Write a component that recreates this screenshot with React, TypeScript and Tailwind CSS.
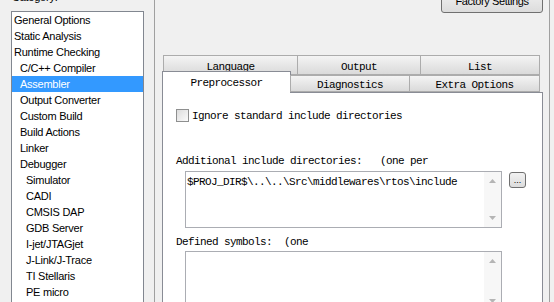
import React from "react";

const items: { label: string; indent: number; selected?: boolean }[] = [
  { label: "General Options", indent: 0 },
  { label: "Static Analysis", indent: 0 },
  { label: "Runtime Checking", indent: 0 },
  { label: "C/C++ Compiler", indent: 1 },
  { label: "Assembler", indent: 1, selected: true },
  { label: "Output Converter", indent: 1 },
  { label: "Custom Build", indent: 1 },
  { label: "Build Actions", indent: 1 },
  { label: "Linker", indent: 1 },
  { label: "Debugger", indent: 1 },
  { label: "Simulator", indent: 2 },
  { label: "CADI", indent: 2 },
  { label: "CMSIS DAP", indent: 2 },
  { label: "GDB Server", indent: 2 },
  { label: "I-jet/JTAGjet", indent: 2 },
  { label: "J-Link/J-Trace", indent: 2 },
  { label: "TI Stellaris", indent: 2 },
  { label: "PE micro", indent: 2 },
];

const mono = "font-['Liberation_Mono',monospace] text-[11px] tracking-[-0.6px] leading-[12px] text-black";

function UpArrow() {
  return (
    <svg width="7" height="4" viewBox="0 0 7 4">
      <path d="M0 4 L3.5 0 L7 4 Z" fill="#b5b5b5" />
    </svg>
  );
}
function DownArrow() {
  return (
    <svg width="7" height="4" viewBox="0 0 7 4">
      <path d="M0 0 L3.5 4 L7 0 Z" fill="#b5b5b5" />
    </svg>
  );
}

function ScrollBar() {
  return (
    <div className="w-[17px] h-full bg-[#f7f7f7] flex flex-col justify-between items-center py-[7px]">
      <UpArrow />
      <DownArrow />
    </div>
  );
}

export default function App() {
  return (
    <div className="w-[554px] h-[302px] overflow-hidden bg-[#f0f0f0] flex font-['Liberation_Sans',sans-serif] text-[11px] tracking-[-0.25px]">
      {/* Left column */}
      <div className="w-[154px] shrink-0 pl-[11px]">
        <div className="h-[11px] flex items-end">
          <span className="leading-[13px] mb-[7px] pl-[1px] text-black">Category:</span>
        </div>
        <div className="w-[133px] h-[330px] border border-[#828790] bg-white">
          {items.map((it) => (
            <div
              key={it.label}
              className={
                "h-[16px] flex items-center leading-[16px] " +
                (it.selected ? "bg-[#3399ff] text-white" : "text-black")
              }
            >
              <span
                className={
                  it.indent === 0 ? "pl-[2px]" : it.indent === 1 ? "pl-[8px]" : "pl-[14px]"
                }
              >
                {it.label}
              </span>
            </div>
          ))}
        </div>
      </div>

      {/* Divider */}
      <div className="w-px shrink-0 bg-[#a0a0a0]" />

      {/* Right column */}
      <div className="w-[394px] shrink-0 pl-[7px] pr-[6px]">
        <div className="flex justify-end">
          <div className="mt-[-10px] w-[102px] h-[23px] rounded-[3px] border border-[#707070] bg-linear-to-b from-[#f2f2f2] to-[#dcdcdc] flex items-center justify-center text-black tracking-[-0.4px]">
            Factory Settings
          </div>
        </div>

        {/* Tabs row 1 */}
        <div className="mt-[42px] ml-[1px] flex h-[20px]">
          <div className="w-[135px] h-[20px] border border-[#acacac] bg-linear-to-b from-[#f4f4f4] to-[#dadada] flex justify-center pt-[5px]">
            <span className={mono}>Language</span>
          </div>
          <div className="w-[124px] ml-[-1px] h-[20px] border border-[#acacac] bg-linear-to-b from-[#f4f4f4] to-[#dadada] flex justify-center pt-[5px]">
            <span className={mono}>Output</span>
          </div>
          <div className="w-[120px] ml-[-1px] h-[20px] border border-[#acacac] bg-linear-to-b from-[#f4f4f4] to-[#dadada] flex justify-center pt-[5px]">
            <span className={mono}>List</span>
          </div>
        </div>

        {/* Tabs row 2 */}
        <div className="relative z-10 mt-[-4px] flex items-end h-[21px]">
          <div className="w-[129px] h-[22px] mb-[-1px] border border-b-0 border-[#898c95] bg-white flex justify-center pt-[5px]">
            <span className={mono}>Preprocessor</span>
          </div>
          <div className="w-[120px] ml-[-1px] h-[17px] border border-[#acacac] bg-linear-to-b from-[#f4f4f4] to-[#dadada] flex justify-center pt-[3px]">
            <span className={mono}>Diagnostics</span>
          </div>
          <div className="w-[131px] ml-[-1px] h-[17px] border border-[#acacac] bg-linear-to-b from-[#f4f4f4] to-[#dadada] flex justify-center pt-[3px]">
            <span className={mono}>Extra Options</span>
          </div>
        </div>

        {/* Tab page */}
        <div className="w-[381px] h-[260px] border border-[#898c95] bg-white pl-[13px] pt-[16px]">
          <div className="flex items-center h-[13px]">
            <div className="w-[13px] h-[13px] border border-[#8e8f8f] bg-linear-to-br from-[#dcdcdc] to-[#fbfbfb] shrink-0" />
            <span className={mono + " ml-[3px] whitespace-pre"}>Ignore standard include directories</span>
          </div>

          <div className={mono + " mt-[33px] whitespace-pre"}>Additional include directories:   (one per</div>

          <div className="mt-[4px] ml-[9px] flex items-start">
            <div className="w-[317px] h-[57px] border border-[#abadb3] bg-white flex">
              <div className={mono + " flex-1 pl-[1px] pt-[4px] whitespace-pre"}>
                {"$PROJ_DIR$\\..\\..\\Src\\middlewares\\rtos\\include"}
              </div>
              <ScrollBar />
            </div>
            <div className="ml-[7px] mt-[1px] w-[17px] h-[16px] rounded-[3px] border border-[#707070] bg-linear-to-b from-[#f2f2f2] to-[#dcdcdc] flex items-end justify-center">
              <span className="text-[9px] leading-[9px] tracking-[0px] text-black mb-[2px]">...</span>
            </div>
          </div>

          <div className={mono + " mt-[8px] whitespace-pre"}>Defined symbols:  (one</div>

          <div className="mt-[3px] ml-[9px]">
            <div className="w-[317px] h-[60px] border border-[#abadb3] bg-white flex">
              <div className="flex-1" />
              <ScrollBar />
            </div>
          </div>
        </div>
      </div>

      {/* Right outer line */}
      <div className="w-px shrink-0 bg-[#a0a0a0]" />
    </div>
  );
}
